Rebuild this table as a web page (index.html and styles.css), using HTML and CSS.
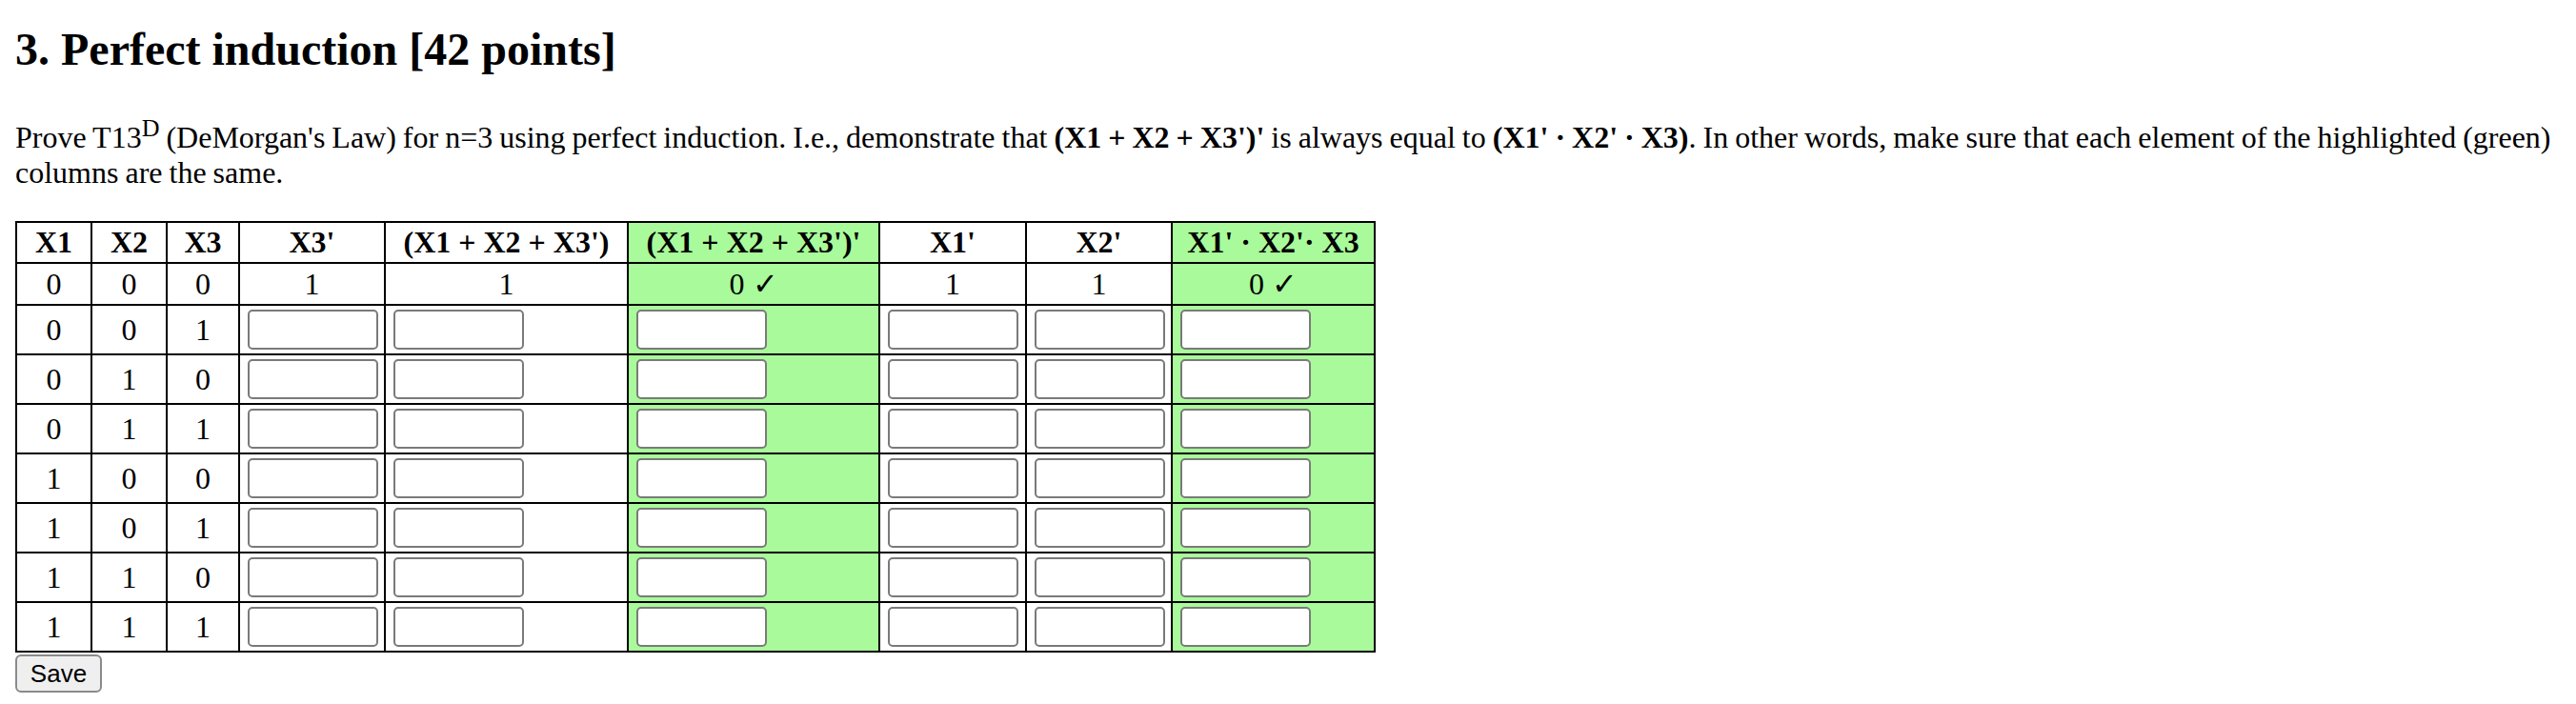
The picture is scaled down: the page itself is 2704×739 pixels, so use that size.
FILE: index.html
```html
<!DOCTYPE html>
<html>
<head>
<meta charset="utf-8">
<title>Perfect induction</title>
<link rel="stylesheet" href="styles.css">
</head>
<body>
<h2 class="title">3. Perfect induction [42 points]</h2>
<p class="prompt">Prove T13<sup>D</sup> (DeMorgan's Law) for n=3 using perfect induction. I.e., demonstrate that <b>(X1 + X2 + X3')'</b> is always equal to <b>(X1' · X2' · X3)</b>. In other words, make sure that each element of the highlighted (green)<br>columns are the same.</p>
<form class="quiz">
<table class="truth">
<colgroup>
<col class="c-x1"><col class="c-x2"><col class="c-x3"><col class="c-x3n"><col class="c-sum"><col class="c-sumn"><col class="c-x1n"><col class="c-x2n"><col class="c-prod">
</colgroup>
<thead>
<tr><th>X1</th><th>X2</th><th>X3</th><th>X3'</th><th>(X1 + X2 + X3')</th><th class="hl">(X1 + X2 + X3')'</th><th>X1'</th><th>X2'</th><th class="hl">X1' · X2'· X3</th></tr>
</thead>
<tbody>
<tr><td>0</td><td>0</td><td>0</td><td>1</td><td>1</td><td class="hl">0 ✓</td><td>1</td><td>1</td><td class="hl">0 ✓</td></tr>
<tr><td>0</td><td>0</td><td>1</td><td class="in"><input type="text"></td><td class="in"><input type="text"></td><td class="in hl"><input type="text"></td><td class="in"><input type="text"></td><td class="in"><input type="text"></td><td class="in hl"><input type="text"></td></tr>
<tr><td>0</td><td>1</td><td>0</td><td class="in"><input type="text"></td><td class="in"><input type="text"></td><td class="in hl"><input type="text"></td><td class="in"><input type="text"></td><td class="in"><input type="text"></td><td class="in hl"><input type="text"></td></tr>
<tr><td>0</td><td>1</td><td>1</td><td class="in"><input type="text"></td><td class="in"><input type="text"></td><td class="in hl"><input type="text"></td><td class="in"><input type="text"></td><td class="in"><input type="text"></td><td class="in hl"><input type="text"></td></tr>
<tr><td>1</td><td>0</td><td>0</td><td class="in"><input type="text"></td><td class="in"><input type="text"></td><td class="in hl"><input type="text"></td><td class="in"><input type="text"></td><td class="in"><input type="text"></td><td class="in hl"><input type="text"></td></tr>
<tr><td>1</td><td>0</td><td>1</td><td class="in"><input type="text"></td><td class="in"><input type="text"></td><td class="in hl"><input type="text"></td><td class="in"><input type="text"></td><td class="in"><input type="text"></td><td class="in hl"><input type="text"></td></tr>
<tr><td>1</td><td>1</td><td>0</td><td class="in"><input type="text"></td><td class="in"><input type="text"></td><td class="in hl"><input type="text"></td><td class="in"><input type="text"></td><td class="in"><input type="text"></td><td class="in hl"><input type="text"></td></tr>
<tr><td>1</td><td>1</td><td>1</td><td class="in"><input type="text"></td><td class="in"><input type="text"></td><td class="in hl"><input type="text"></td><td class="in"><input type="text"></td><td class="in"><input type="text"></td><td class="in hl"><input type="text"></td></tr>
</tbody>
</table>
<button type="button" class="save">Save</button>
</form>
</body>
</html>
```
FILE: styles.css
```css
html, body {
  background: #fff;
}
body {
  margin: 0;
  padding: 16px;
  font-family: "Liberation Serif", "Times New Roman", serif;
  font-size: 32px;
  color: #000;
}
.title {
  font-size: 48px;
  font-weight: bold;
  line-height: 41px;
  margin: 15px 0 54px;
}
.prompt {
  margin: 0 0 32px;
  line-height: normal;
  white-space: nowrap;
  word-spacing: -1px;
}
.prompt sup {
  font-size: 26px;
  line-height: 0;
}
.quiz {
  margin: 0;
}
.truth {
  border-collapse: collapse;
  table-layout: fixed;
  border: 2px solid #000;
}
.c-x1 { width: 79px; }
.c-x2 { width: 79px; }
.c-x3 { width: 76px; }
.c-x3n { width: 152px; }
.c-sum { width: 255px; }
.c-sumn { width: 264px; }
.c-x1n { width: 154px; }
.c-x2n { width: 150px; }
.c-prod { width: 213px; }
.truth th,
.truth td {
  border: 2px solid #000;
  text-align: center;
  padding: 5px 6px;
  line-height: 32px;
  white-space: nowrap;
}
.truth th {
  padding: 4px 6px 5px;
  font-weight: bold;
}
.truth td.in {
  text-align: left;
  padding: 4px 6px 4px 8px;
}
.truth .hl {
  background: #a9fa9a;
}
.truth input {
  display: block;
  box-sizing: border-box;
  width: 137px;
  height: 42px;
  margin: 0;
  border: 2px solid #7a7a7a;
  border-radius: 5px;
  background: #fff;
  font-size: 24px;
}
.save {
  display: block;
  margin-top: 2px;
  box-sizing: border-box;
  width: 91px;
  height: 40px;
  padding: 0;
  font-family: "Liberation Sans", Arial, sans-serif;
  font-size: 26px;
  color: #000;
  background: #efefef;
  border: 2px solid #8a8a8a;
  border-radius: 6px;
}
```
